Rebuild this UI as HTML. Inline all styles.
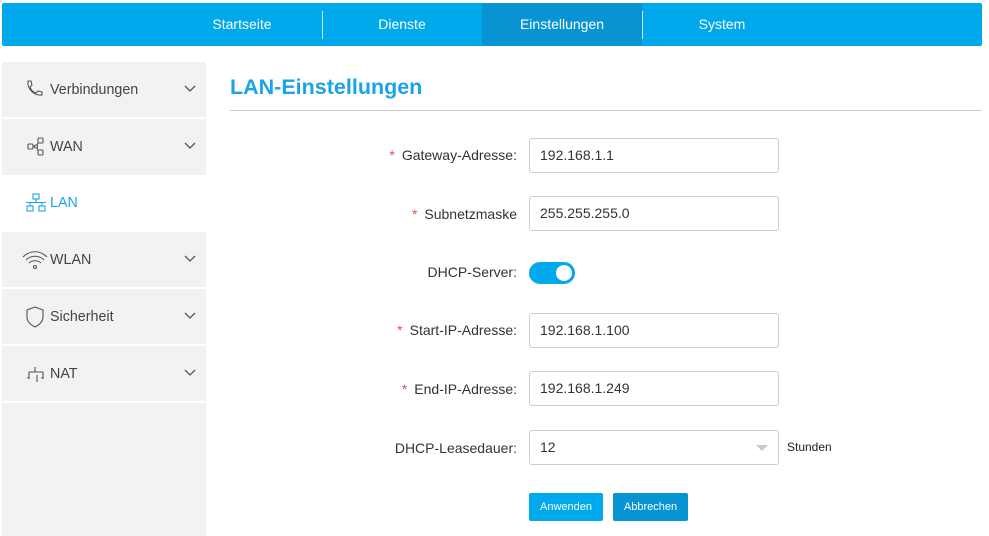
<!DOCTYPE html>
<html><head><meta charset="utf-8"><style>
*{box-sizing:border-box;margin:0;padding:0}
body{width:989px;height:536px;background:#fff;font-family:"Liberation Sans",sans-serif;position:relative;overflow:hidden;color:#333}
.nav{position:absolute;left:2px;top:3px;width:980px;height:43px;background:#00a8ec;border-radius:2px}
.tab{position:absolute;top:0;height:43px;line-height:43px;color:#fff;font-size:14px;text-align:center}
.div{position:absolute;top:8px;width:1px;height:28px;background:#cfe9f7}
.side{position:absolute;left:2px;top:62px;width:204px;height:474px;background:#f2f2f2}
.item{position:absolute;left:0;width:204px;height:55px;background:#f2f2f2;font-size:14.3px;color:#444}
.item .t{position:absolute;left:48px;top:20px}
.item svg.ic{position:absolute;left:22px;top:17px}
.chev{position:absolute;left:182px;top:23px}
.sep{position:absolute;left:0;width:204px;height:2px;background:#fff}
h1{position:absolute;left:230px;top:75px;font-size:21.5px;color:#1aa3e6;font-weight:bold}
.hr{position:absolute;left:230px;top:110px;width:752px;height:1px;background:#ccc}
.lab{position:absolute;right:472px;font-size:14px;color:#333;text-align:right;white-space:nowrap}
.lab b{color:#f04a4a;font-weight:normal;margin-right:7px}
.inp{position:absolute;left:529px;width:250px;height:35px;border:1px solid #c9ced6;border-radius:3px;font-size:14px;line-height:33px;padding-left:10px;color:#333}
.btn{position:absolute;top:493px;height:28px;line-height:28px;color:#fff;font-size:11px;text-align:center;border-radius:2px}
</style></head><body>
<div class="nav">
<div class="tab" style="left:160px;width:160px">Startseite</div>
<div class="div" style="left:320px"></div>
<div class="tab" style="left:320px;width:160px">Dienste</div>
<div class="tab" style="left:480px;width:160px;background:#0894d2">Einstellungen</div>
<div class="div" style="left:640px"></div>
<div class="tab" style="left:640px;width:160px">System</div>
</div>
<div class="side">
<div class="item" style="top:0"><svg class="ic" width="20" height="20" viewBox="0 0 20 20" fill="none" stroke="#555" stroke-width="1.1"><path d="M4 2l3 0 1 4-2 2c1 3 3 5 6 6l2-2 4 1v3c-8 1-15-6-14-14z"/></svg><span class="t">Verbindungen</span><svg class="chev" width="12" height="8"><path d="M1 1l5 5 5-5" stroke="#555" fill="none" stroke-width="1.3"/></svg></div>
<div class="sep" style="top:55px"></div>
<div class="item" style="top:57px"><svg class="ic" width="24" height="22" viewBox="0 0 24 22" fill="none" stroke="#555" stroke-width="1.1"><rect x="4" y="8" width="5" height="5" rx="1"/><rect x="14" y="2" width="5" height="5" rx="1"/><rect x="14" y="14" width="5" height="5" rx="1"/><circle cx="12" cy="10.5" r="1.5"/><path d="M9 10.5h2M13 9.5l1-3M13 11.5l1 3"/></svg><span class="t">WAN</span><svg class="chev" width="12" height="8"><path d="M1 1l5 5 5-5" stroke="#555" fill="none" stroke-width="1.3"/></svg></div>
<div class="item" style="top:113px;background:#fff;color:#1aa3e6;height:57px"><svg class="ic" width="24" height="22" viewBox="0 0 24 22" fill="none" stroke="#1aa3e6" stroke-width="1.1"><rect x="9" y="2" width="6" height="5"/><rect x="3" y="14" width="6" height="5"/><rect x="15" y="14" width="6" height="5"/><path d="M12 7v3M2 10.5h20M6 10.5v3.5M18 10.5v3.5"/></svg><span class="t">LAN</span></div>
<div class="item" style="top:170px"><svg class="ic" width="26" height="22" viewBox="0 0 26 22" fill="none" stroke="#555" stroke-width="1.1" style="left:20px"><path d="M1 8c7-7 17-7 24 0M4 11c5-5 13-5 18 0M7 14c3-3 9-3 12 0"/><circle cx="13" cy="18" r="1.5"/></svg><span class="t">WLAN</span><svg class="chev" width="12" height="8"><path d="M1 1l5 5 5-5" stroke="#555" fill="none" stroke-width="1.3"/></svg></div>
<div class="sep" style="top:225px"></div>
<div class="item" style="top:227px"><svg class="ic" width="22" height="22" viewBox="0 0 22 22" fill="none" stroke="#555" stroke-width="1.1"><path d="M11 1l8 3v7c0 5-4 8-8 10-4-2-8-5-8-10V4z"/></svg><span class="t">Sicherheit</span><svg class="chev" width="12" height="8"><path d="M1 1l5 5 5-5" stroke="#555" fill="none" stroke-width="1.3"/></svg></div>
<div class="sep" style="top:282px"></div>
<div class="item" style="top:284px"><svg class="ic" width="24" height="22" viewBox="0 0 24 22" fill="none" stroke="#555" stroke-width="1.1"><path d="M5 15V9h14v6M11 9V4M13 12v7M3 15h3M17 15h3"/></svg><span class="t">NAT</span><svg class="chev" width="12" height="8"><path d="M1 1l5 5 5-5" stroke="#555" fill="none" stroke-width="1.3"/></svg></div>
<div class="sep" style="top:339px"></div>
</div>
<h1>LAN-Einstellungen</h1>
<div class="hr"></div>
<div class="lab" style="top:147px"><b>*</b>Gateway-Adresse:</div>
<div class="inp" style="top:138px">192.168.1.1</div>
<div class="lab" style="top:206px"><b>*</b>Subnetzmaske</div>
<div class="inp" style="top:196px">255.255.255.0</div>
<div class="lab" style="top:264px">DHCP-Server:</div>
<div style="position:absolute;left:529px;top:262px;width:46px;height:22px;border-radius:11px;background:#00a8ec"><div style="position:absolute;right:3px;top:3px;width:16px;height:16px;border-radius:50%;background:#fff"></div></div>
<div class="lab" style="top:322px"><b>*</b>Start-IP-Adresse:</div>
<div class="inp" style="top:313px">192.168.1.100</div>
<div class="lab" style="top:381px"><b>*</b>End-IP-Adresse:</div>
<div class="inp" style="top:371px">192.168.1.249</div>
<div class="lab" style="top:440px">DHCP-Leasedauer:</div>
<div class="inp" style="top:430px">12<svg style="position:absolute;right:10px;top:14px" width="12" height="7"><path d="M0 0h12L6 6z" fill="#c3cbd6"/></svg></div>
<div style="position:absolute;left:787px;top:440px;font-size:12px;color:#222">Stunden</div>
<div class="btn" style="left:529px;width:74px;background:#00a8ec">Anwenden</div>
<div class="btn" style="left:613px;width:75px;background:#0894d2">Abbrechen</div>
</body></html>
